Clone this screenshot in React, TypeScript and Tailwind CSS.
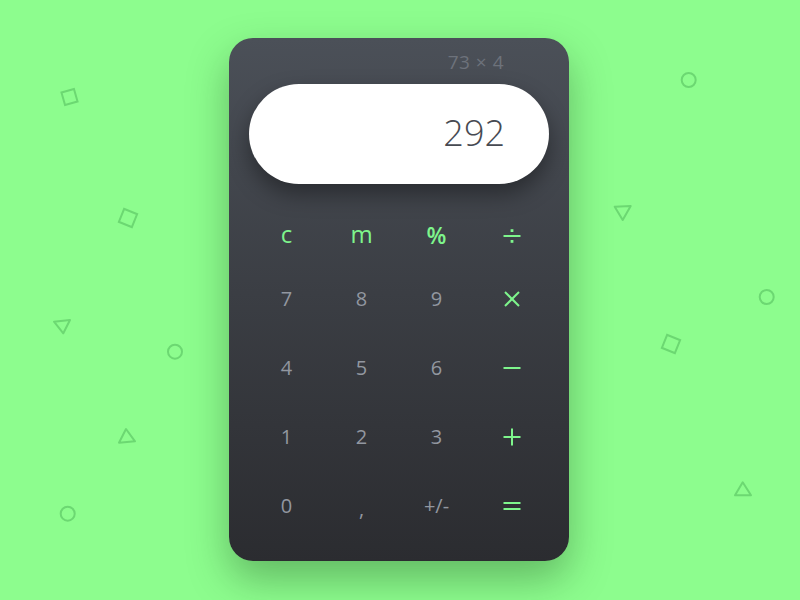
import React from "react";

const GREEN = "#7ef58c";

function OpIcon({ kind }: { kind: string }) {
  const common = { stroke: GREEN, strokeWidth: 2, fill: "none", strokeLinecap: "butt" as const };
  return (
    <svg width="18" height="18" viewBox="0 0 18 18">
      {kind === "div" && (
        <g>
          <line x1="0.5" y1="9" x2="17.5" y2="9" {...common} />
          <rect x="7.6" y="2.2" width="2.8" height="2.8" fill={GREEN} />
          <rect x="7.6" y="13" width="2.8" height="2.8" fill={GREEN} />
        </g>
      )}
      {kind === "mul" && (
        <g>
          <line x1="2" y1="2" x2="16" y2="16" {...common} />
          <line x1="16" y1="2" x2="2" y2="16" {...common} />
        </g>
      )}
      {kind === "sub" && <line x1="0.5" y1="9" x2="17.5" y2="9" {...common} />}
      {kind === "add" && (
        <g>
          <line x1="0.5" y1="9" x2="17.5" y2="9" {...common} />
          <line x1="9" y1="0.5" x2="9" y2="17.5" {...common} />
        </g>
      )}
      {kind === "eq" && (
        <g>
          <line x1="0.5" y1="6" x2="17.5" y2="6" {...common} />
          <line x1="0.5" y1="12" x2="17.5" y2="12" {...common} />
        </g>
      )}
    </svg>
  );
}

function Background() {
  const s = { stroke: "#6cd872", strokeWidth: 2, fill: "none" };
  return (
    <svg className="absolute inset-0" width="800" height="600" viewBox="0 0 800 600">
      <rect x="-6.5" y="-6.5" width="13" height="13" transform="translate(69.5 97) rotate(-16)" {...s} />
      <rect x="-7" y="-7" width="14" height="14" transform="translate(128 218) rotate(22)" {...s} />
      <rect x="-7" y="-7" width="14" height="14" transform="translate(671 344) rotate(22)" {...s} />
      <polygon points="54,321.7 70,320 63.3,333.3" {...s} strokeLinejoin="round" />
      <polygon points="126,429 119,442.7 135,441.3" {...s} strokeLinejoin="round" />
      <polygon points="614.7,206.7 630.7,206 622.7,220" {...s} strokeLinejoin="round" />
      <polygon points="742.7,482.3 735,495.3 751,495.3" {...s} strokeLinejoin="round" />
      <circle cx="175" cy="351.7" r="7" {...s} />
      <circle cx="67.7" cy="513.7" r="7" {...s} />
      <circle cx="688.7" cy="80" r="7" {...s} />
      <circle cx="766.7" cy="297" r="7" {...s} />
    </svg>
  );
}

const digitRows: (string | { op: string })[][] = [
  ["7", "8", "9", { op: "mul" }],
  ["4", "5", "6", { op: "sub" }],
  ["1", "2", "3", { op: "add" }],
  ["0", ",", "+/-", { op: "eq" }],
];

export default function App() {
  return (
    <div
      className="relative w-[800px] h-[600px] bg-[#8dfd8e] overflow-hidden flex items-center justify-center"
      style={{ fontFamily: '"Open Sans", "Noto Sans", sans-serif' }}
    >
      <Background />
      <div className="relative -ml-[2px] -mt-[1px] w-[340px] h-[523px] rounded-[24px] bg-gradient-to-b from-[#4b5058] to-[#2b2c30] shadow-[0_18px_40px_rgba(20,60,20,0.35)] px-[20px] pt-[11px] flex flex-col">
        <div className="h-[26px] leading-[26px] text-right pr-[45px] text-[19px] tracking-[0.5px] text-[#6d727b]">
          73 × 4
        </div>
        <div className="mt-[9px] h-[100px] rounded-full bg-white shadow-[0_10px_22px_rgba(0,0,0,0.38)] flex items-center justify-end pr-[44px]">
          <span className="-mt-[3px] text-[36px] font-light text-[#474a52] leading-none">292</span>
        </div>
        <div className="mt-[24px] grid grid-cols-4">
          <div className="h-[56px] flex items-center justify-center text-[24px] leading-none" style={{ color: GREEN }}>
            <span className="-mt-[4px]">c</span>
          </div>
          <div className="h-[56px] flex items-center justify-center text-[24px] leading-none" style={{ color: GREEN }}>
            <span className="-mt-[4px]">m</span>
          </div>
          <div className="h-[56px] flex items-center justify-center text-[23px] leading-none font-semibold" style={{ color: GREEN }}>
            <span className="-mt-[2px]">%</span>
          </div>
          <div className="h-[56px] flex items-center justify-center">
            <OpIcon kind="div" />
          </div>
          {digitRows.map((row, ri) =>
            row.map((cell, ci) =>
              typeof cell === "string" ? (
                <div
                  key={`${ri}-${ci}`}
                  className="h-[69px] flex items-center justify-center text-[20px] leading-none text-[#9297a0]"
                >
                  <span className={cell === "," ? "mt-[6px]" : ""}>{cell}</span>
                </div>
              ) : (
                <div key={`${ri}-${ci}`} className="h-[69px] flex items-center justify-center">
                  <OpIcon kind={cell.op} />
                </div>
              )
            )
          )}
        </div>
      </div>
    </div>
  );
}
